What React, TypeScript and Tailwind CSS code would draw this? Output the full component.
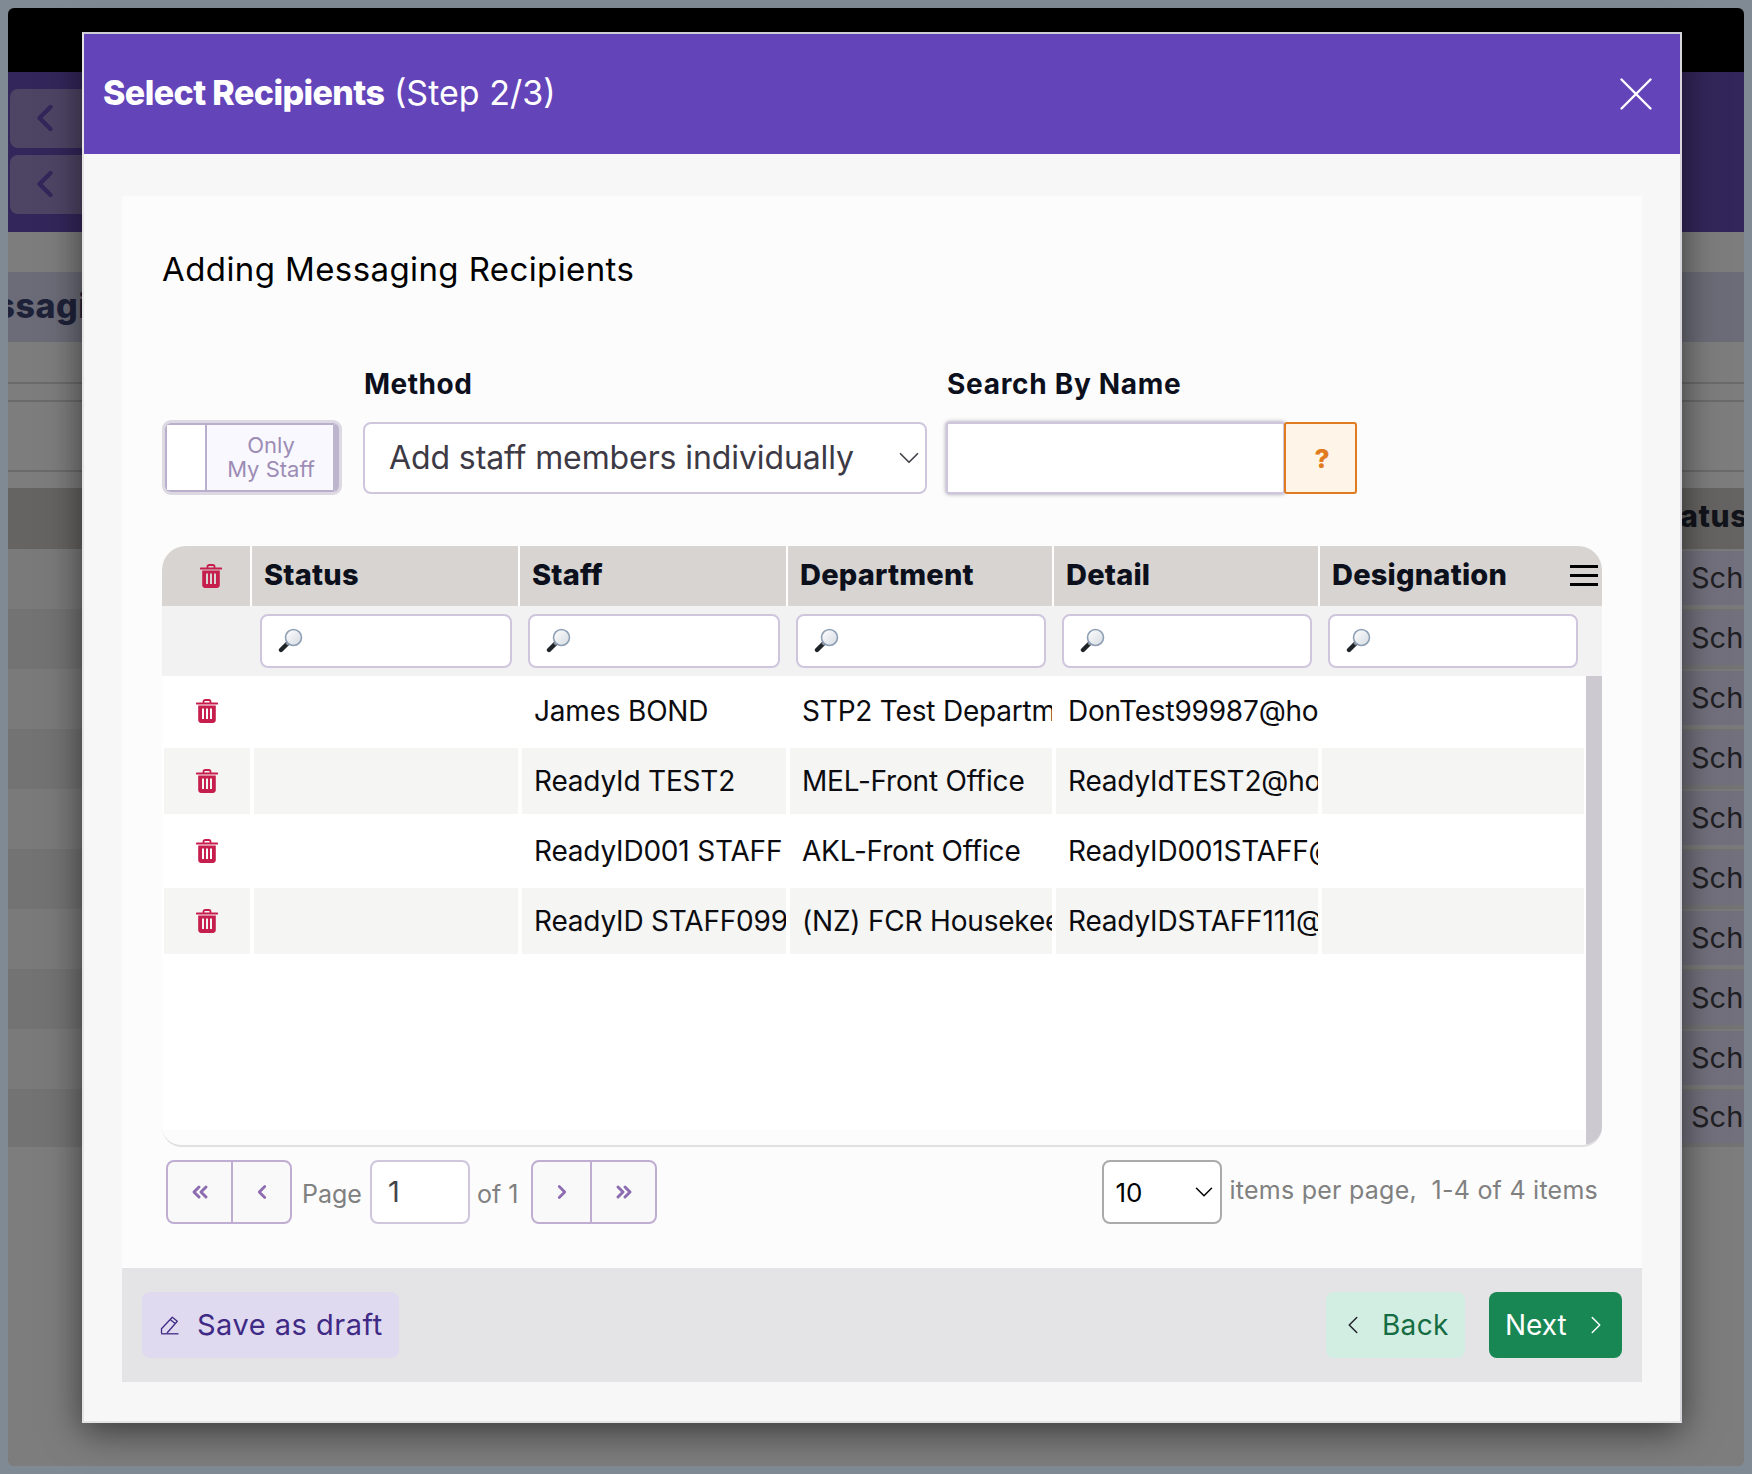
import { ChevronDown, ChevronLeft, ChevronRight, ChevronsLeft, ChevronsRight, X } from "lucide-react";

const headCols = "grid grid-cols-[88px_266px_266px_264px_264px_282px] gap-x-[2px]";
const rowCols = "grid grid-cols-[88px_266px_266px_264px_264px_264px] gap-x-[2px]";

const rows = [
  { staff: "James BOND", dept: "STP2 Test Department", detail: "DonTest99987@hotmail.com" },
  { staff: "ReadyId TEST2", dept: "MEL-Front Office", detail: "ReadyIdTEST2@hotmail.com" },
  { staff: "ReadyID001 STAFF", dept: "AKL-Front Office", detail: "ReadyID001STAFF@hotmail.com" },
  { staff: "ReadyID STAFF099", dept: "(NZ) FCR Housekeeping", detail: "ReadyIDSTAFF111@hotmail.com" },
];

function Trash({ className }: { className: string }) {
  return (
    <svg viewBox="0 0 22 24" className={className} fill="currentColor">
      <path d="M7.5 4V2.6C7.5 1.7 8.2 1 9.1 1h3.8c.9 0 1.6.7 1.6 1.6V4" fill="none" stroke="currentColor" strokeWidth="1.8" />
      <rect x="0" y="3.4" width="22" height="2.2" rx="0.6" />
      <path
        fillRule="evenodd"
        d="M2.2 6.5h17.6V21c0 1.6-1.2 3-2.8 3H5c-1.6 0-2.8-1.4-2.8-3V6.5zM6 9.5v10.5h2V9.5H6zm4 0v10.5h2V9.5h-2zm4 0v10.5h2V9.5h-2z"
      />
    </svg>
  );
}

function Magnifier() {
  return (
    <svg viewBox="0 0 25 25" className="mb-[2px] h-[25px] w-[25px]">
      <defs>
        <linearGradient id="lens" x1="0" y1="0" x2="1" y2="1">
          <stop offset="0" stopColor="#ffffff" />
          <stop offset="1" stopColor="#d5dae0" />
        </linearGradient>
      </defs>
      <path d="M9.5 15.5 3 22" stroke="#1f2429" strokeWidth="4.4" strokeLinecap="round" />
      <path d="M11 14 8.5 16.5" stroke="#8b9198" strokeWidth="3" />
      <circle cx="15.5" cy="9.5" r="8" fill="url(#lens)" stroke="#8ea0b6" strokeWidth="1.6" />
    </svg>
  );
}

function Pencil() {
  return (
    <svg viewBox="0 0 20 20" className="h-[20px] w-[20px]" fill="none" stroke="#3f2b85" strokeWidth="1.3" strokeLinejoin="round">
      <path d="M1.5 18v-4.3L12.3 2.2l5 4L7 18" />
      <path d="M10.2 4.6l4.9 4" />
      <path d="M1 18.8h17.5" />
    </svg>
  );
}

function Backdrop() {
  return (
    <div className="flex h-full flex-col overflow-hidden rounded-[6px] bg-[#7d7d7d]">
      <div className="h-[64px] bg-black" />
      <div className="flex h-[160px] flex-col gap-[7px] bg-[#33265a] pl-[2px] pt-[17px]">
        {[0, 1].map((i) => (
          <div key={i} className="flex h-[59px] w-[100px] items-center rounded-lg bg-[#4e4565] pl-[13px]">
            <ChevronLeft className="mb-[2px] h-[44px] w-[44px] text-[#33265a]" strokeWidth={2.4} />
          </div>
        ))}
      </div>
      <div className="mt-[40px] flex h-[70px] items-center overflow-hidden bg-[#6c6c78] pb-[4px]">
        <span className="-ml-[66px] text-[34px] font-extrabold tracking-[0.5px] text-[#1e2238]">Messaging</span>
      </div>
      <div className="mt-[40px] h-[2px] bg-[#6b6b6b]" />
      <div className="mt-[16px] h-[2px] bg-[#6b6b6b]" />
      <div className="mt-[68px] h-[2px] bg-[#6b6b6b]" />
      <div className="mt-[16px] flex h-[61px] items-center justify-end overflow-hidden bg-[#666462] pb-[4px]">
        <span className="-mr-[4px] text-[30px] font-extrabold tracking-[0.6px] text-[#12141c]">Status</span>
      </div>
      {Array.from({ length: 10 }).map((_, i) => (
        <div key={i} className={`flex h-[60px] justify-end pb-[4px] pt-[2px] last:h-[58px] ${i % 2 ? "bg-[#737373]" : "bg-[#7a7a7a]"}`}>
          <div className="flex w-[62px] items-center bg-[#72707c] pl-[9px] text-[29px] text-[#1f1f24]">Sch</div>
        </div>
      ))}
    </div>
  );
}

function FilterInput({ className }: { className: string }) {
  return (
    <div className={`flex h-[54px] items-center rounded-lg border-2 border-[#cfc6de] bg-white pl-[16px] ${className}`}>
      <Magnifier />
    </div>
  );
}

function PagerGroup({ left, right, split }: { left: React.ReactNode; right: React.ReactNode; split: string }) {
  return (
    <div className="flex h-[64px] w-[126px] rounded-lg border-2 border-[#c0aed2] bg-[#f9f9f9] text-[#8d6db0]">
      <div className={`flex items-center justify-center border-r-2 border-[#c0aed2] ${split}`}>{left}</div>
      <div className="flex flex-1 items-center justify-center">{right}</div>
    </div>
  );
}

function Grid() {
  return (
    <div className="mt-[52px] w-[1440px]">
      <div className={`${headCols} h-[60px] overflow-hidden rounded-t-[24px] bg-white text-[29px] font-extrabold text-[#0c101c]`}>
        <div className="flex items-center bg-[#d7d4d1] pl-[38px]">
          <Trash className="h-[24px] w-[22px] text-[#c71f4d]" />
        </div>
        {["Status", "Staff", "Department", "Detail"].map((h) => (
          <div key={h} className="flex items-center bg-[#d7d4d1] pb-[2px] pl-[12px] tracking-[0.2px]">
            {h}
          </div>
        ))}
        <div className="flex items-center justify-between bg-[#d7d4d1] pb-[2px] pl-[12px] pr-[4px] tracking-[0.2px]">
          Designation
          <div className="flex w-[28px] flex-col gap-[6px]">
            <div className="h-[3px] bg-black" />
            <div className="h-[3px] bg-black" />
            <div className="h-[3px] bg-black" />
          </div>
        </div>
      </div>
      <div className={`${headCols} h-[70px] bg-[#f2f2f3] pt-[8px]`}>
        <div />
        <FilterInput className="ml-[8px] mr-[6px]" />
        <FilterInput className="ml-[8px] mr-[6px]" />
        <FilterInput className="ml-[8px] mr-[6px]" />
        <FilterInput className="ml-[8px] mr-[6px]" />
        <FilterInput className="ml-[8px] mr-[24px]" />
      </div>
      <div className="flex h-[471px] overflow-hidden rounded-b-[20px] border-b-2 border-[#e0e0e0] bg-[#fcfcfc]">
        <div className="h-[454px] w-[1424px] bg-white">
          {rows.map((r, i) => (
            <div key={r.staff} className={`${rowCols} h-[70px] text-[28px] tracking-[-0.2px] text-[#0c0c10] ${i % 2 ? "py-[2px]" : ""}`}>
              <div className={`ml-[2px] flex items-center pl-[32px] ${i % 2 ? "bg-[#f5f5f4]" : ""}`}>
                <Trash className="h-[24px] w-[22px] text-[#c71f4d]" />
              </div>
              <div className={`ml-[2px] ${i % 2 ? "bg-[#f5f5f4]" : ""}`} />
              {[r.staff, r.dept, r.detail].map((t) => (
                <div key={t} className={`ml-[2px] flex items-center overflow-hidden whitespace-nowrap pb-[1px] pl-[12px] ${i % 2 ? "bg-[#f5f5f4]" : ""}`}>
                  {t}
                </div>
              ))}
              <div className={`ml-[2px] ${i % 2 ? "bg-[#f5f5f4]" : ""}`} />
            </div>
          ))}
        </div>
        <div className="w-[16px] bg-[#ccc9d0]" />
      </div>
    </div>
  );
}

function Pager() {
  return (
    <div className="mt-[13px] flex w-[1440px] items-center justify-between pl-[4px] pr-[4px]">
      <div className="flex items-center text-[25px] text-[#808080]">
        <PagerGroup
          split="w-[65px]"
          left={<ChevronsLeft className="h-[24px] w-[24px]" strokeWidth={3} />}
          right={<ChevronLeft className="h-[22px] w-[22px]" strokeWidth={3} />}
        />
        <span className="ml-[10px] mt-[6px]">Page</span>
        <div className="ml-[8px] flex h-[64px] w-[100px] items-center rounded-lg border-2 border-[#cfc6de] bg-white pl-[16px] text-[29px] text-[#44444c]">1</div>
        <span className="ml-[7px] mt-[6px]">of 1</span>
        <div className="ml-[13px]">
          <PagerGroup
            split="w-[59px]"
            left={<ChevronRight className="h-[22px] w-[22px]" strokeWidth={3} />}
            right={<ChevronsRight className="h-[24px] w-[24px]" strokeWidth={3} />}
          />
        </div>
      </div>
      <div className="flex items-center text-[25px] text-[#808080]">
        <div className="flex h-[64px] w-[120px] shrink-0 items-center justify-between rounded-lg border-2 border-[#aaaaaa] bg-white pl-[12px] pr-[1px] text-[26px] text-black">
          10
          <ChevronDown className="h-[30px] w-[30px]" strokeWidth={1.2} />
        </div>
        <span className="mb-[3px] ml-[8px] tracking-[0.25px]">items per page,&nbsp; 1-4 of 4 items</span>
      </div>
    </div>
  );
}

function Modal() {
  return (
    <div className="absolute left-[82px] top-[32px] flex h-[1391px] w-[1600px] flex-col border-2 border-b-[#e4e4e4] border-l-[#e4e4e4] border-r-[#d8d6dc] border-t-[#cfcdd6] bg-[#f7f7f7] shadow-[0_8px_34px_rgba(0,0,0,0.55)]">
      <div className="flex h-[120px] shrink-0 items-center justify-between bg-[#6344b9] pl-[19px] pr-[15px] text-white">
        <div className="pb-[4px] text-[34px]">
          <span className="font-extrabold tracking-[-0.6px]">Select Recipients</span> <span>(Step 2/3)</span>
        </div>
        <X className="h-[58px] w-[58px]" strokeWidth={1} />
      </div>
      <div className="ml-[38px] mt-[42px] w-[1520px] bg-[#fcfcfc] pb-[44px] pl-[40px]">
        <div className="mt-[50px] flex h-[48px] items-center text-[33px] tracking-[0.4px] text-black">Adding Messaging Recipients</div>
        <div className="mt-[74px] flex items-end">
          <div className="-mb-px flex h-[75px] w-[180px] rounded-[9px] border-[3px] border-[#dcd9e2]">
            <div className="flex flex-1 rounded-[6px] border-2 border-r-[6px] border-[#b9aecb] border-r-[#bdb4cd]">
              <div className="w-[40px] border-r-2 border-[#b9aecb] bg-white" />
              <div className="flex flex-1 items-center justify-center bg-[#f8f8fe] pb-[2px] pl-[2px] text-center text-[22px] leading-[24px] text-[#9d8cb5]">
                Only
                <br />
                My Staff
              </div>
            </div>
          </div>
          <div className="ml-[21px] w-[564px]">
            <div className="mb-[22px] pl-px text-[28px] font-bold leading-[32px] tracking-[0.5px] text-[#0c101c]">Method</div>
            <div className="flex h-[72px] items-center justify-between rounded-lg border-2 border-[#cfc6de] bg-white pl-[24px] text-[32px] tracking-[-0.1px] text-[#3d3a45]">
              Add staff members individually
              <ChevronDown className="-mr-px h-[34px] w-[34px] text-[#44444c]" strokeWidth={1.2} />
            </div>
          </div>
          <div className="ml-[19px]">
            <div className="mb-[22px] pl-px text-[28px] font-bold leading-[32px] tracking-[0.7px] text-[#0c101c]">Search By Name</div>
            <div className="flex">
              <div className="h-[72px] w-[339px] rounded-[3px] border-2 border-[#cfc6de] bg-white shadow-[0_0_4px_rgba(90,80,110,0.6)]" />
              <div className="-ml-px flex h-[72px] w-[73px] items-center justify-center rounded-[3px] border-2 border-[#e07b20] bg-[#fff4e8] pl-[3px] text-[26px] font-extrabold text-[#e07b20]">?</div>
            </div>
          </div>
        </div>
        <Grid />
        <Pager />
      </div>
      <div className="ml-[38px] flex h-[114px] w-[1520px] shrink-0 items-center justify-between bg-[#e4e4e6] px-[20px] text-[28px]">
        <div className="flex h-[66px] w-[257px] items-center rounded-lg bg-[#e0daf1] pl-[18px] text-[#3f2b85]">
          <Pencil />
          <span className="ml-[17px] text-[29px] tracking-[0.5px]">Save as draft</span>
        </div>
        <div className="flex gap-[24px]">
          <div className="flex h-[66px] w-[139px] items-center rounded-lg bg-[#d2ede1] pl-[12px] text-[#146c43]">
            <ChevronLeft className="h-[30px] w-[30px] text-[#20222a]" strokeWidth={1.2} />
            <span className="ml-[14px] tracking-[0.3px]">Back</span>
          </div>
          <div className="flex h-[66px] w-[133px] items-center rounded-lg bg-[#198754] pl-[16px] text-white">
            <span>Next</span>
            <ChevronRight className="ml-[14px] h-[30px] w-[30px]" strokeWidth={1.2} />
          </div>
        </div>
      </div>
    </div>
  );
}

export default function App() {
  return (
    <div className="relative h-[1474px] w-[1752px] bg-[#7f8a94] p-[8px] font-['Inter',sans-serif]">
      <Backdrop />
      <Modal />
    </div>
  );
}
